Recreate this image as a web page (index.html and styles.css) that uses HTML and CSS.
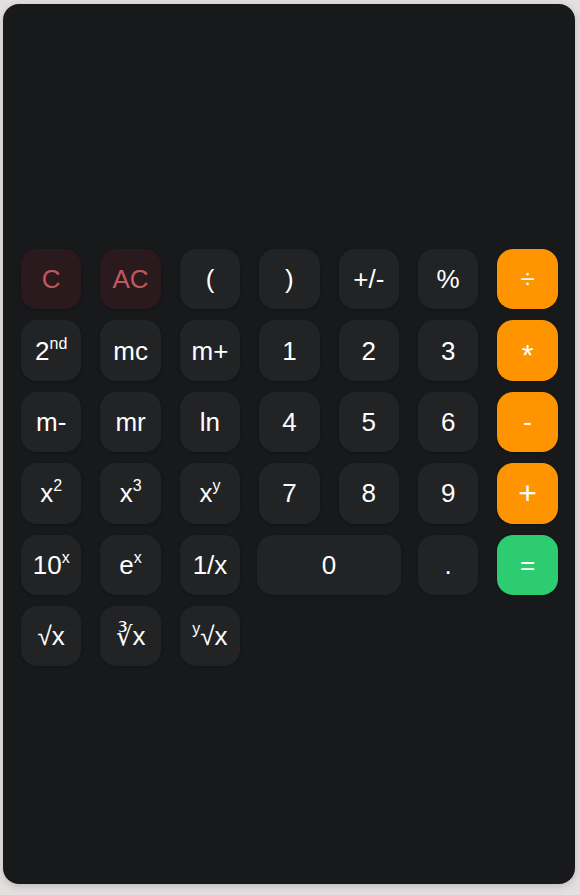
FILE: index.html
```html
<!DOCTYPE html>
<html lang="en">
<head>
<meta charset="utf-8">
<title>Calculator</title>
<link rel="stylesheet" href="styles.css">
</head>
<body>
<div class="calc">
  <div class="display"></div>
  <div class="keys">
    <button class="key clear"><span>C</span></button>
    <button class="key clear"><span>AC</span></button>
    <button class="key"><span>(</span></button>
    <button class="key"><span>)</span></button>
    <button class="key"><span>+/-</span></button>
    <button class="key"><span>%</span></button>
    <button class="key op"><span>÷</span></button>

    <button class="key"><span>2<sup>nd</sup></span></button>
    <button class="key"><span>mc</span></button>
    <button class="key"><span>m+</span></button>
    <button class="key"><span>1</span></button>
    <button class="key"><span>2</span></button>
    <button class="key"><span>3</span></button>
    <button class="key op times"><span>*</span></button>

    <button class="key"><span>m-</span></button>
    <button class="key"><span>mr</span></button>
    <button class="key"><span>ln</span></button>
    <button class="key"><span>4</span></button>
    <button class="key"><span>5</span></button>
    <button class="key"><span>6</span></button>
    <button class="key op"><span>-</span></button>

    <button class="key"><span>x<sup>2</sup></span></button>
    <button class="key"><span>x<sup>3</sup></span></button>
    <button class="key"><span>x<sup>y</sup></span></button>
    <button class="key"><span>7</span></button>
    <button class="key"><span>8</span></button>
    <button class="key"><span>9</span></button>
    <button class="key op plus"><span>+</span></button>

    <button class="key"><span>10<sup>x</sup></span></button>
    <button class="key"><span>e<sup>x</sup></span></button>
    <button class="key"><span>1/x</span></button>
    <button class="key zero"><span>0</span></button>
    <button class="key"><span>.</span></button>
    <button class="key eq"><span>=</span></button>

    <button class="key"><span>√x</span></button>
    <button class="key"><span>∛x</span></button>
    <button class="key"><span><sup>y</sup>√x</span></button>
  </div>
</div>
</body>
</html>
```

FILE: styles.css
```css
html, body {
  margin: 0;
  padding: 0;
  background: #e4e0df;
}

body {
  padding: 4px 5px 11px 3px;
  font-family: "Liberation Sans", Arial, sans-serif;
}

.calc {
  width: 572px;
  height: 880px;
  box-sizing: border-box;
  background: #18191b;
  border-radius: 16px;
  box-shadow: 0 2px 8px rgba(0, 0, 0, 0.18);
  padding: 0 17px 0 18px;
  display: flex;
  flex-direction: column;
}

.display {
  height: 245px;
  flex: none;
}

.keys {
  display: grid;
  grid-template-columns: repeat(7, 60.4px);
  grid-auto-rows: 60.4px;
  column-gap: 19px;
  row-gap: 11px;
}

.key {
  border: none;
  border-radius: 16px;
  background: #222325;
  color: #ffffff;
  font-family: inherit;
  font-size: 26px;
  padding: 0;
  display: flex;
  align-items: center;
  justify-content: center;
  box-shadow: 0 1px 3px rgba(0, 0, 0, 0.25);
}

.key span {
  line-height: 1;
}

.key sup {
  font-size: 16px;
  line-height: 0;
  vertical-align: 11px;
}

.clear {
  background: #2b1a1d;
  color: #c0585e;
}

.op {
  background: #fe9500;
}

.times span {
  font-size: 30px;
  position: relative;
  top: 4px;
}

.plus {
  font-size: 32px;
}

.eq {
  background: #2ecc71;
}

.zero {
  grid-column: span 2;
  margin: 0 -2px;
}
```
